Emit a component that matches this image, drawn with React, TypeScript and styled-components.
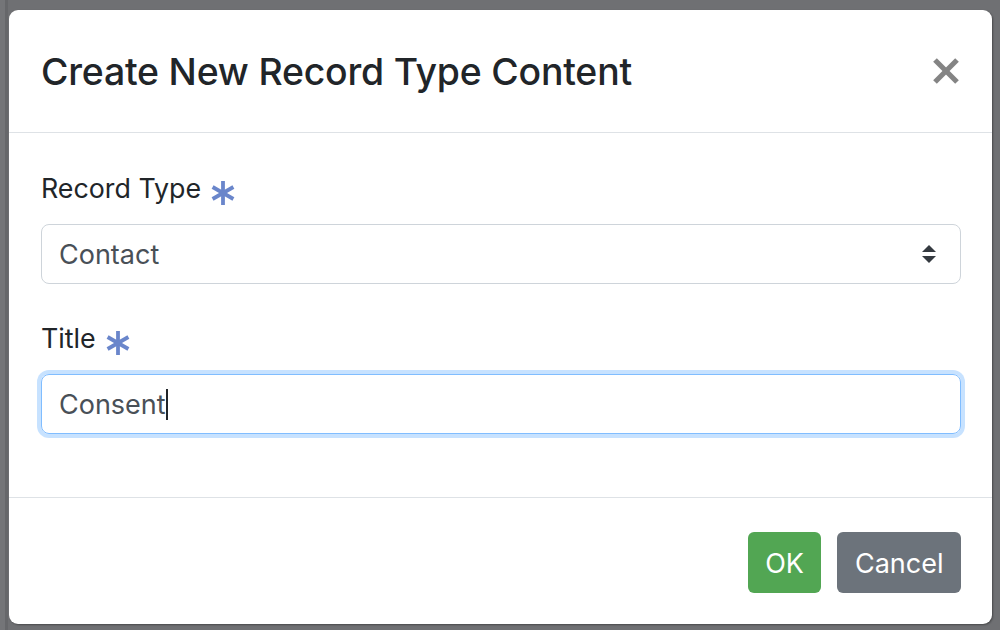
import React from "react";
import styled, { createGlobalStyle } from "styled-components";

const GlobalStyle = createGlobalStyle`
    html, body {
        margin: 0;
        padding: 0;
        background: #6f7073;
    }
    * {
        box-sizing: border-box;
    }
`;

const Backdrop = styled.div`
    width: 1000px;
    height: 630px;
    padding: 10px 8px 6px 9px;
    display: flex;
    background-color: #6f7073;
    background-image: linear-gradient(90deg, #747578 0 5px, #66676a 5px 8px, transparent 8px);
    font-family: Inter, "Liberation Sans", Arial, sans-serif;
`;

const Modal = styled.div`
    flex: 1;
    display: flex;
    flex-direction: column;
    background: #fff;
    border-radius: 9px;
    box-shadow: 1px 1px 2px rgba(0, 0, 0, 0.35);
    overflow: hidden;
`;

const Header = styled.div`
    height: 123px;
    flex-shrink: 0;
    display: flex;
    align-items: center;
    justify-content: space-between;
    padding: 0 33px 0 32px;
    border-bottom: 1px solid #dee2e6;
`;

const Title = styled.h5`
    margin: 0;
    font-size: 37.4px;
    font-weight: 500;
    color: #212529;
    letter-spacing: -0.2px;
`;

const CloseButton = styled.button`
    display: flex;
    padding: 0;
    border: none;
    background: none;
    cursor: pointer;
`;

const Body = styled.div`
    flex: 1;
    padding: 38px 31px 0 32px;
`;

const Group = styled.div<{ $last?: boolean }>`
    display: flex;
    flex-direction: column;
    margin-bottom: ${(p) => (p.$last ? 0 : 37)}px;
`;

const Label = styled.label`
    display: flex;
    align-items: center;
    gap: 10px;
    height: 34px;
    margin-bottom: 19px;
    font-size: 26.8px;
    color: #212529;
`;

const Field = styled.div<{ $focus?: boolean }>`
    height: 60px;
    display: flex;
    align-items: center;
    justify-content: space-between;
    padding: 0 24px 0 17px;
    border: 1px solid ${(p) => (p.$focus ? "#80bdff" : "#ced4da")};
    border-radius: 8px;
    box-shadow: ${(p) => (p.$focus ? "0 0 0 4px rgba(0, 123, 255, 0.22)" : "none")};
    font-size: 27px;
    color: #495057;
`;

const Text = styled.span`
    display: flex;
    align-items: center;
`;

const Caret = styled.span`
    display: inline-block;
    width: 2.5px;
    height: 31px;
    background: #212529;
`;

const Footer = styled.div`
    height: 127px;
    flex-shrink: 0;
    display: flex;
    align-items: center;
    justify-content: flex-end;
    gap: 16px;
    padding: 2px 31px 0 0;
    border-top: 1px solid #dee2e6;
`;

const Button = styled.button<{ $variant: "ok" | "cancel" }>`
    height: 61px;
    padding: 2px 17.5px 0;
    border: none;
    border-radius: 6px;
    font-family: inherit;
    font-size: 27px;
    color: #fff;
    background: ${(p) => (p.$variant === "ok" ? "#52a653" : "#6c737b")};
    cursor: pointer;
`;

const Asterisk = () => (
    <svg width="24" height="24" viewBox="0 0 24 24" style={{ marginTop: 9 }}>
        <g stroke="#6a86cb" strokeWidth="3.8" strokeLinecap="butt">
            <line x1="12" y1="0" x2="12" y2="24" />
            <line x1="1.6" y1="6" x2="22.4" y2="18" />
            <line x1="1.6" y1="18" x2="22.4" y2="6" />
        </g>
    </svg>
);

const CloseIcon = () => (
    <svg width="26" height="26" viewBox="0 0 26 26">
        <g stroke="#848484" strokeWidth="5.2">
            <line x1="2" y1="2" x2="24" y2="24" />
            <line x1="24" y1="2" x2="2" y2="24" />
        </g>
    </svg>
);

const SelectArrows = () => (
    <svg width="14" height="20" viewBox="0 0 14 20">
        <path d="M7 1 L14 8 H0 Z" fill="#343a40" />
        <path d="M0 12 H14 L7 19 Z" fill="#343a40" />
    </svg>
);

function App() {
    return (
        <>
            <GlobalStyle />
            <Backdrop>
                <Modal>
                    <Header>
                        <Title>Create New Record Type Content</Title>
                        <CloseButton aria-label="Close">
                            <CloseIcon />
                        </CloseButton>
                    </Header>
                    <Body>
                        <Group>
                            <Label>
                                Record Type <Asterisk />
                            </Label>
                            <Field>
                                <Text>Contact</Text>
                                <SelectArrows />
                            </Field>
                        </Group>
                        <Group $last>
                            <Label>
                                Title <Asterisk />
                            </Label>
                            <Field $focus>
                                <Text>
                                    Consent
                                    <Caret />
                                </Text>
                            </Field>
                        </Group>
                    </Body>
                    <Footer>
                        <Button $variant="ok">OK</Button>
                        <Button $variant="cancel">Cancel</Button>
                    </Footer>
                </Modal>
            </Backdrop>
        </>
    );
}

export default App;
